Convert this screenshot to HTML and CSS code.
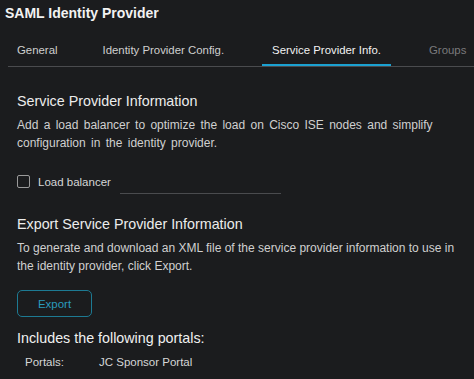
FILE: index.html
```html
<!DOCTYPE html>
<html lang="en">
<head>
    <meta charset="UTF-8">
    <meta name="viewport" content="width=device-width, initial-scale=1.0">
    <link rel="stylesheet" href="styles.css">
</head>
<body>
    <div class="drawer">
        <h1 class="drawer-title">SAML Identity Provider</h1>
        <nav class="tabs">
            <a class="tab">General</a>
            <a class="tab">Identity Provider Config.</a>
            <a class="tab active">Service Provider Info.</a>
            <a class="tab disabled">Groups</a>
        </nav>
        <div class="content">
            <h2 class="section-title">Service Provider Information</h2>
            <p class="section-text wide">Add a load balancer to optimize the load on Cisco ISE nodes and simplify configuration in the identity provider.</p>
            <div class="field-row">
                <label class="check">
                    <span class="check-box"></span>
                    <span>Load balancer</span>
                </label>
                <div class="field-line"></div>
            </div>
            <h2 class="section-title export-title">Export Service Provider Information</h2>
            <p class="section-text">To generate and download an XML file of the service provider information to use in the identity provider, click Export.</p>
            <button class="btn-export">Export</button>
            <h3 class="portals-title">Includes the following portals:</h3>
            <div class="portal-row">
                <span class="portal-label">Portals:</span>
                <span>JC Sponsor Portal</span>
            </div>
        </div>
    </div>
</body>
</html>
```

FILE: styles.css
```css
body {
   margin: 0;
   background: #1b1c1e;
   font-family: "Liberation Sans", Arial, sans-serif;
   color: #e4e4e4;
   overflow: hidden;
}
.drawer {
   height: 379px;
   overflow: hidden;
}
.drawer-title {
   margin: 0;
   padding: 5px 5px 0;
   font-size: 14px;
   font-weight: bold;
   line-height: 16px;
   color: #f2f2f2;
}
.tabs {
   display: flex;
   gap: 28px;
   margin: 22px 0 0 8px;
   border-bottom: 1px solid #4a4b4e;
   white-space: nowrap;
   overflow: hidden;
}
.tab {
   flex-shrink: 0;
   padding: 0 10px 7px;
   font-size: 11.4px;
   line-height: 14px;
   color: #cfcfcf;
   border-bottom: 3px solid transparent;
   margin-bottom: -1px;
}
.tab:first-child {
   padding-left: 9px;
   padding-right: 7px;
}
.tab.active {
   color: #f2f2f2;
   border-bottom-color: #1ba1d1;
}
.tab.disabled {
   color: #7a7a7c;
}
.content {
   padding: 0 17px;
}
.section-title {
   margin: 25px 0 0;
   font-size: 14.3px;
   font-weight: normal;
   line-height: 18px;
   color: #ececec;
}
.section-text {
   margin: 6px 0 0;
   font-size: 12px;
   line-height: 18px;
   color: #d0d0d0;
}
.section-text.wide {
   word-spacing: 2px;
}
.field-row {
   display: flex;
   align-items: flex-end;
   margin-top: 23px;
}
.check {
   display: flex;
   align-items: center;
   gap: 8px;
   font-size: 11.5px;
   color: #d6d6d6;
   width: 103px;
   padding-bottom: 6px;
}
.check-box {
   width: 11px;
   height: 11px;
   border: 1px solid #9a9a9a;
   border-radius: 2px;
}
.field-line {
   width: 161px;
   border-bottom: 1px solid #4a4b4e;
}
.export-title {
   margin-top: 21px;
}
.btn-export {
   display: block;
   margin-top: 15px;
   width: 75px;
   height: 27px;
   background: transparent;
   border: 1px solid #1d7a93;
   border-radius: 5px;
   color: #2a9bbd;
   font-family: inherit;
   font-size: 11.5px;
}
.portals-title {
   margin: 12px 0 0;
   font-size: 14.3px;
   font-weight: normal;
   line-height: 18px;
   color: #f0f0f0;
}
.portal-row {
   display: flex;
   margin-top: 9px;
   padding-left: 8px;
   font-size: 11.5px;
   color: #d6d6d6;
}
.portal-label {
   width: 74px;
}
```
